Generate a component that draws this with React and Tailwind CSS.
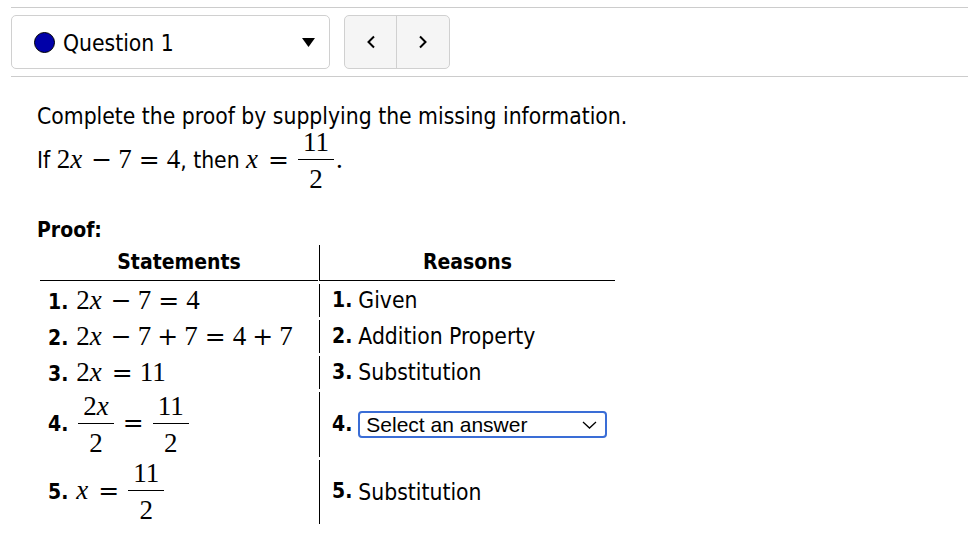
import React from 'react';

// KaTeX-ish math pieces
const X = () => <span className="italic pr-[3px]">x</span>;
const Bin = ({ children }) => (
    <span className="inline-block w-[21px] mx-[6px] text-center font-['DejaVu_Serif',serif] text-[25px]">{children}</span>
);
const Rel = ({ children }) => (
    <span className="inline-block w-[21px] mx-[7px] text-center font-['DejaVu_Serif',serif] text-[25px]">{children}</span>
);
const M = ({ children }) => (
    <span className="font-['Liberation_Serif',serif] text-[27px] leading-[20px] whitespace-nowrap">{children}</span>
);

const Frac = ({ n, d }) => (
    <span className="inline-flex flex-col items-center align-middle mx-[2px] font-['Liberation_Serif',serif] text-[27px] leading-none">
        <span className="px-[5px] pb-[3px]">{n}</span>
        <span className="border-t border-black w-full text-center px-[5px] pt-[6px]">{d}</span>
    </span>
);

const rows = [
    {
        s: <M>2<X /><Bin>−</Bin>7<Rel>=</Rel>4</M>,
        r: 'Given',
        h: 'h-[33px]',
    },
    {
        s: <M>2<X /><Bin>−</Bin>7<Bin>+</Bin>7<Rel>=</Rel>4<Bin>+</Bin>7</M>,
        r: 'Addition Property',
        h: 'h-[33px]',
    },
    {
        s: <M>2<X /><Rel>=</Rel>11</M>,
        r: 'Substitution',
        h: 'h-[33px]',
    },
    {
        s: (
            <>
                <Frac n={<>2<span className="italic">x</span></>} d="2" />
                <M><Rel>=</Rel></M>
                <Frac n="11" d="2" />
            </>
        ),
        r: null,
        h: 'h-[65px]',
    },
    {
        s: (
            <>
                <M><X /><Rel>=</Rel></M>
                <Frac n="11" d="2" />
            </>
        ),
        r: 'Substitution',
        h: 'h-[64px]',
    },
];

const App = () => {
    return (
        <div className="min-h-[541px] bg-white text-black font-['DejaVu_Sans_Condensed','DejaVu_Sans',sans-serif] text-[22.7px]">
            <div className="pt-[7px]">
                <div className="ml-[11px] border-y border-[#cccccc] py-[7px] flex gap-[14px]">
                    <div className="w-[319px] h-[54px] border border-[#d0d0d0] rounded-[5px] flex items-center pl-[22px] pr-[14px]">
                        <span className="w-[21px] h-[21px] rounded-full bg-[#0000a8] border-[1.5px] border-black"></span>
                        <span className="ml-[8px] mt-[2px]">Question 1</span>
                        <svg className="ml-auto" width="13" height="9" viewBox="0 0 13 9">
                            <polygon points="0,0 13,0 6.5,9" fill="#000" />
                        </svg>
                    </div>
                    <div className="w-[106px] h-[54px] border border-[#d0d0d0] rounded-[5px] bg-[#f5f5f5] flex">
                        <div className="w-[52px] flex items-center justify-center border-r border-[#d0d0d0]">
                            <svg width="12" height="16" viewBox="0 0 12 16" fill="none" stroke="#000" strokeWidth="2">
                                <path d="M9 2.5 L3.5 8 L9 13.5" />
                            </svg>
                        </div>
                        <div className="flex-1 flex items-center justify-center">
                            <svg width="12" height="16" viewBox="0 0 12 16" fill="none" stroke="#000" strokeWidth="2">
                                <path d="M3 2.5 L8.5 8 L3 13.5" />
                            </svg>
                        </div>
                    </div>
                </div>
            </div>

            <div className="pl-[37px] pt-[26px]">
                <p className="leading-[26px]">Complete the proof by supplying the missing information.</p>
                <p className="leading-[20px]">
                    If <M>2<X /><Bin>−</Bin>7<Rel>=</Rel>4</M>, then <M><X /><Rel>=</Rel></M>
                    <Frac n="11" d="2" />
                    <M>.</M>
                </p>

                <p className="mt-[23px] font-bold text-[21px] leading-[28px]">Proof:</p>

                <div className="mt-[1px] ml-[3px] grid grid-cols-[278px_297px] gap-y-[3px]">
                    <div className="h-[36px] border-b border-black flex items-center justify-center font-bold text-[21px]">
                        Statements
                    </div>
                    <div className="h-[36px] border-b border-l border-black ml-[1px] flex items-center justify-center font-bold text-[21px]">
                        Reasons
                    </div>
                    {rows.map((row, i) => (
                        <React.Fragment key={i}>
                            <div className={`${row.h} pl-[8px] flex items-center whitespace-nowrap`}>
                                <span className="leading-[20px]">
                                    <span className="font-bold text-[21px] mr-[8px]">{i + 1}.</span>
                                    {row.s}
                                </span>
                            </div>
                            <div className={`${row.h} border-l border-black ml-[1px] pl-[12px] flex items-center`}>
                                <span className="font-bold text-[21px] mr-[6px]">{i + 1}.</span>
                                {row.r ? (
                                    <span>{row.r}</span>
                                ) : (
                                    <div className="w-[249px] h-[27px] border-2 border-[#3a6dd6] rounded-[4px] flex items-center pl-[6px] pr-[8px] font-['Liberation_Sans',Arial,sans-serif] text-[21px]">
                                        <span>Select an answer</span>
                                        <svg className="ml-auto" width="15" height="8" viewBox="0 0 15 8" fill="none" stroke="#000" strokeWidth="1.3">
                                            <path d="M1 1 L7.5 7 L14 1" />
                                        </svg>
                                    </div>
                                )}
                            </div>
                        </React.Fragment>
                    ))}
                </div>
            </div>
        </div>
    );
};

export default App;
